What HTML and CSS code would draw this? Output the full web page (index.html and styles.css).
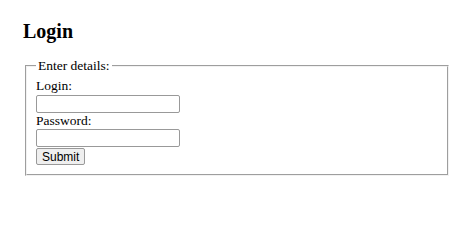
FILE: index.html
```html
<!DOCTYPE html>
<html lang="en">
<head>
<meta charset="utf-8">
<title>Login</title>
<link rel="stylesheet" href="styles.css">
</head>
<body>
<main class="page">
  <h2 class="title">Login</h2>
  <form class="form">
    <fieldset class="box">
      <legend class="legend">Enter details:</legend>
      <div class="fields">
        <label class="label" for="login">Login:</label>
        <input class="input input-first" id="login" type="text">
        <label class="label" for="password">Password:</label>
        <input class="input input-second" id="password" type="password">
        <button class="submit" type="submit">Submit</button>
      </div>
    </fieldset>
  </form>
</main>
</body>
</html>
```

FILE: styles.css
```css
html, body {
  margin: 0;
  padding: 0;
  background: #ffffff;
}

body {
  font-family: "Liberation Serif", "Times New Roman", serif;
  color: #000000;
}

.page {
  padding: 20px 23px 0;
}

.title {
  margin: 0 0 15.3px;
  font-size: 20px;
  line-height: 23px;
  font-weight: bold;
}

.form {
  margin: 0;
}

.box {
  margin: 0 2px;
  border: 2px groove #f2f2f2;
  padding: 4.7px 9px 9px 9px;
  min-width: 0;
}

.legend {
  padding: 0 2px;
  font-size: 13.5px;
  line-height: 15.33px;
}

.fields {
  display: flex;
  flex-direction: column;
  align-items: flex-start;
}

.label {
  font-size: 13.5px;
  line-height: 15.33px;
}

.input {
  box-sizing: border-box;
  width: 144px;
  height: 18px;
  margin: 0;
  padding: 1px 2px;
  border: 1px solid #999999;
  border-radius: 2px;
  background: #ffffff;
  font-family: "Liberation Sans", Arial, sans-serif;
  font-size: 11px;
}

.input-first {
  margin-top: 1.5px;
}

.input-second {
  margin-top: 0.5px;
}

.submit {
  box-sizing: border-box;
  height: 17.5px;
  margin: 1px 0 0;
  padding: 0 5px;
  border: 1px solid #999999;
  border-radius: 2px;
  background: #efefef;
  color: #000000;
  font-family: "Liberation Sans", Arial, sans-serif;
  font-size: 12px;
  line-height: 14px;
}
```
